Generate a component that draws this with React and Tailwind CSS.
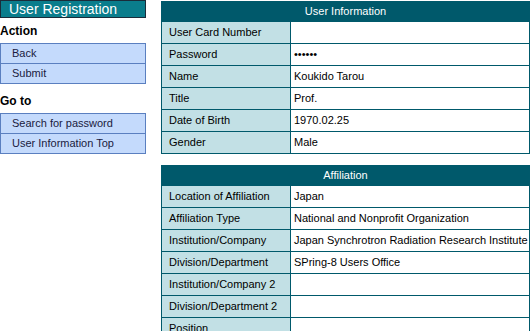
import React from "react";

const userInfo = [
  ["User Card Number", ""],
  ["Password", "••••••"],
  ["Name", "Koukido Tarou"],
  ["Title", "Prof."],
  ["Date of Birth", "1970.02.25"],
  ["Gender", "Male"],
];

const affiliation = [
  ["Location of Affiliation", "Japan"],
  ["Affiliation Type", "National and Nonprofit Organization"],
  ["Institution/Company", "Japan Synchrotron Radiation Research Institute"],
  ["Division/Department", "SPring-8 Users Office"],
  ["Institution/Company 2", ""],
  ["Division/Department 2", ""],
  ["Position", ""],
];

const NavBox = ({ items }) => (
  <div className="border border-[#5a7fc0] bg-[#c4dafc]">
    {items.map((item, i) => (
      <div
        key={item}
        className={`pl-[11px] text-[11px] leading-[19px] text-[#1a1a40] ${
          i > 0 ? "h-[20px] border-t border-[#5a7fc0]" : "h-[19px]"
        }`}
      >
        {item}
      </div>
    ))}
  </div>
);

const InfoTable = ({ title, rows }) => (
  <div className="w-[369px] border-l border-r border-[#00596b]">
    <div className="h-[21px] bg-[#00596b] text-center text-[11px] leading-[21px] text-white">
      {title}
    </div>
    {rows.map(([label, value]) => (
      <div key={label} className="flex h-[22px] border-b border-[#00596b] text-[11px] leading-[21px] text-black">
        <div className="w-[129px] shrink-0 border-r border-[#00596b] bg-[#c2e0e5] pl-[7px] whitespace-nowrap">
          {label}
        </div>
        <div className="flex-1 bg-white pl-[3px] whitespace-nowrap overflow-hidden">{value}</div>
      </div>
    ))}
  </div>
);

export default function App() {
  return (
    <div
      className="flex h-[331px] w-[530px] overflow-hidden bg-white"
      style={{ fontFamily: '"Liberation Sans", Arial, sans-serif' }}
    >
      <div className="w-[146px] shrink-0">
        <div className="h-[18px] border border-[#1a2c3a] bg-[#0a7d8c] pl-[8px] text-[14px] leading-[16px] text-white">
          User Registration
        </div>
        <div className="mt-[4px] h-[18px] text-[12px] font-bold leading-[18px] text-black">Action</div>
        <div className="mt-[3px]">
          <NavBox items={["Back", "Submit"]} />
        </div>
        <div className="mt-[8px] h-[18px] text-[12px] font-bold leading-[18px] text-black">Go to</div>
        <div className="mt-[3px]">
          <NavBox items={["Search for password", "User Information Top"]} />
        </div>
      </div>
      <div className="ml-[15px] flex flex-col pt-[1px]">
        <InfoTable title="User Information" rows={userInfo} />
        <div className="mt-[11px]">
          <InfoTable title="Affiliation" rows={affiliation} />
        </div>
      </div>
    </div>
  );
}
